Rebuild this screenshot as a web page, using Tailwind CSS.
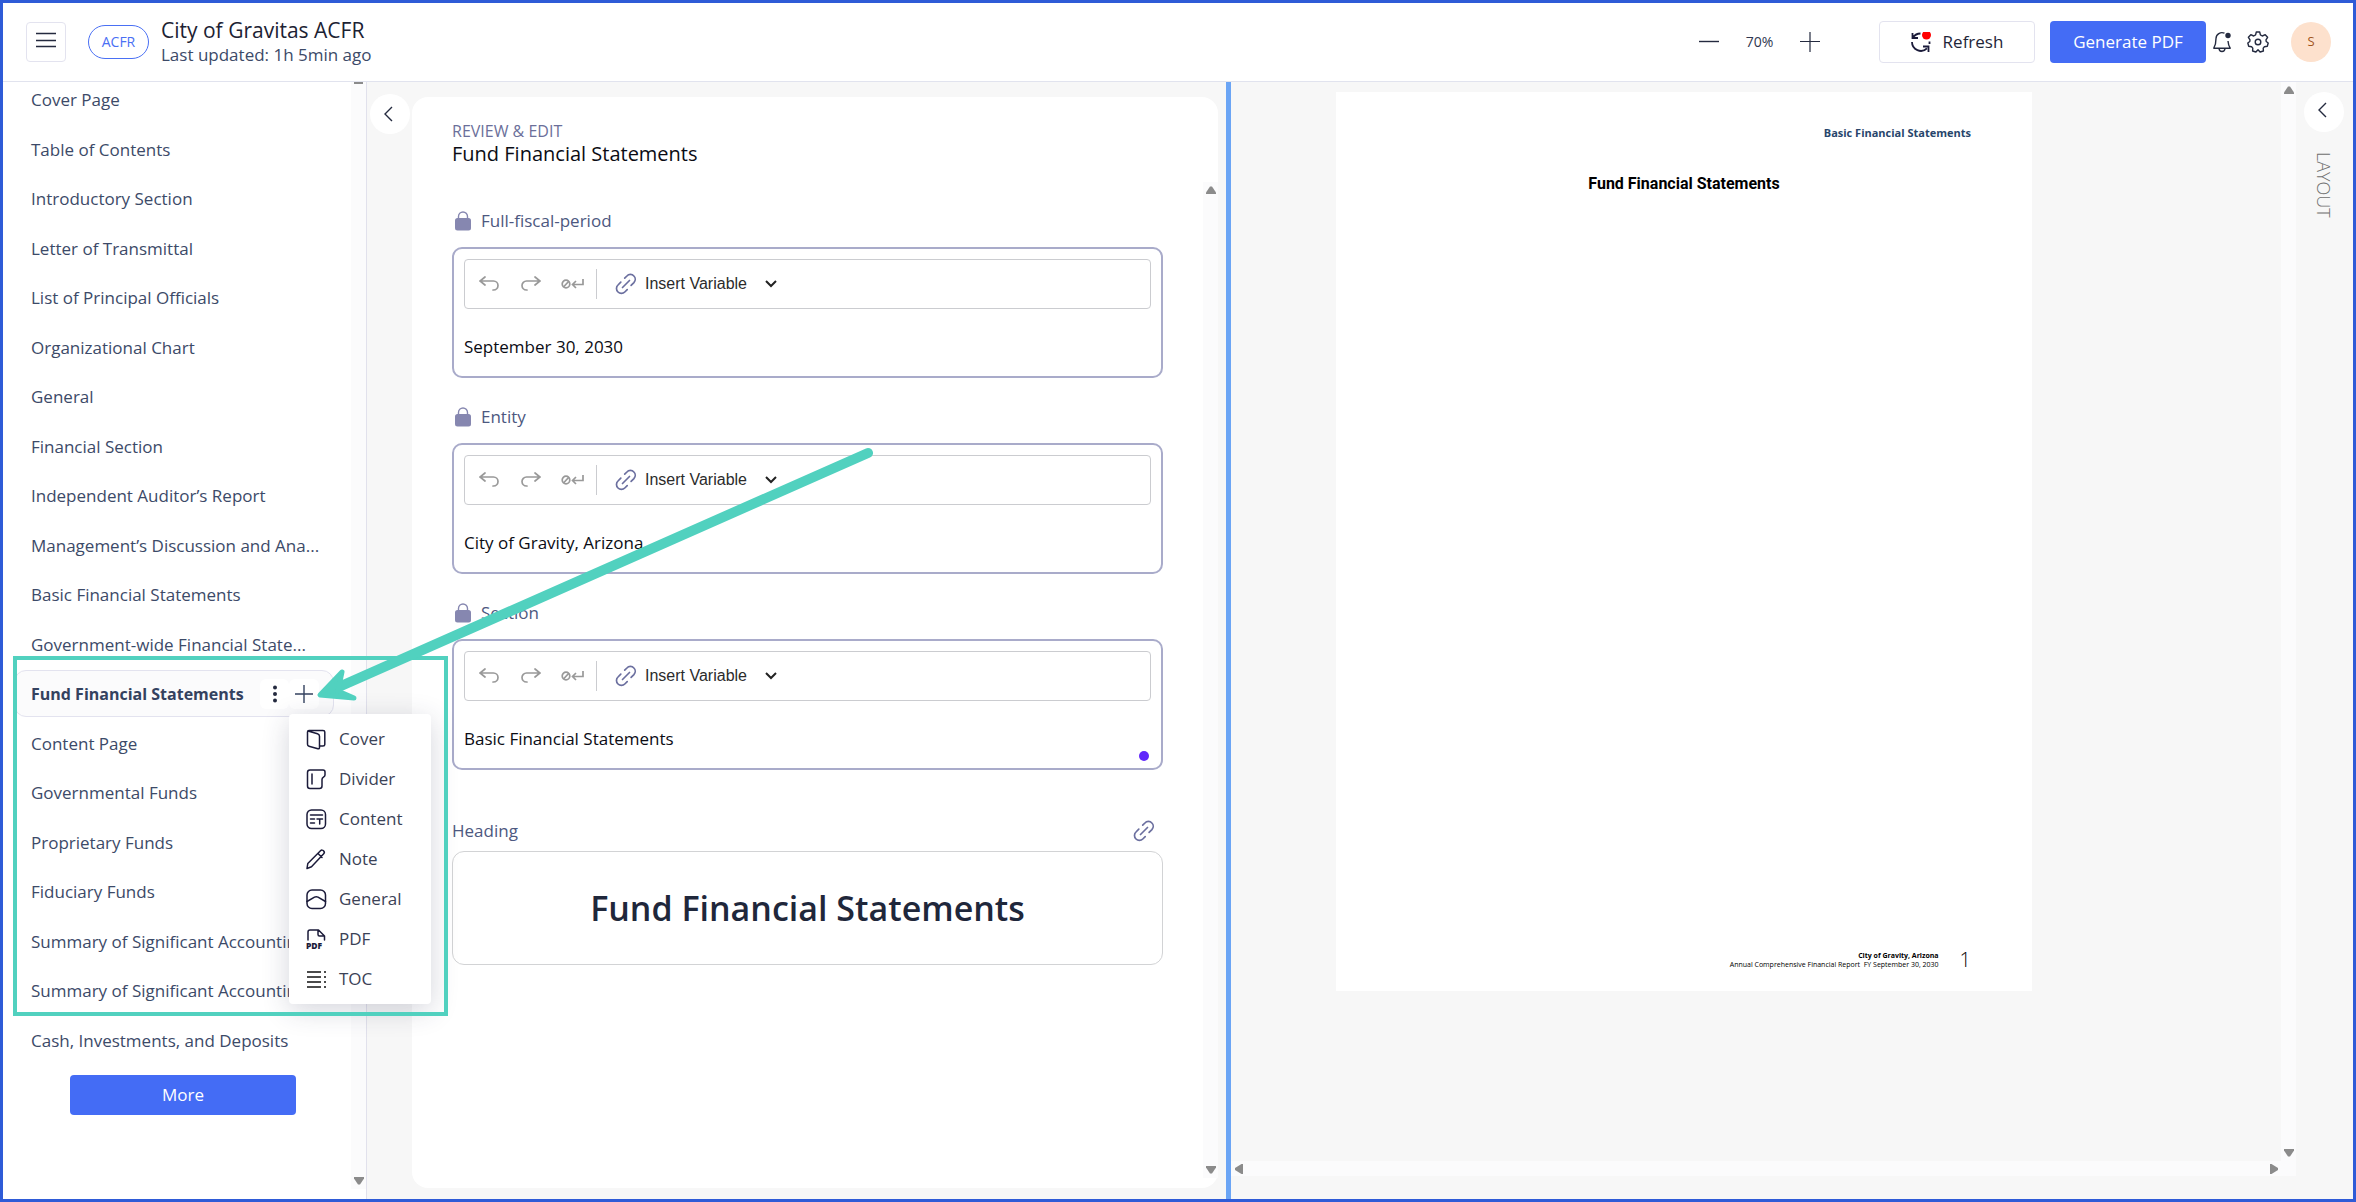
<!DOCTYPE html>
<html lang="en">
<head>
    <meta charset="UTF-8">
    <meta name="viewport" content="width=device-width, initial-scale=1.0">
    <title>City of Gravitas ACFR</title>
    <script src="https://cdn.jsdelivr.net/npm/@tailwindcss/browser@4"></script>
</head>
<body class="relative flex h-screen flex-col overflow-hidden border-3 border-[#2f5bd7] bg-white font-['Open_Sans',sans-serif] text-[17px] text-[#3c4a68]">
    <!-- Shared icons -->
    <svg class="hidden">
        <symbol id="link" viewBox="0 0 22 22" fill="none" stroke="currentColor" stroke-width="1.7" stroke-linecap="round">
            <path d="M7.5 14.5l7-7M9.7 5.2l2.2-2.2a4.6 4.6 0 0 1 7 0 4.8 4.8 0 0 1 0 6.6l-2.8 2.8M5.8 9.2L3 12a4.8 4.8 0 0 0 0 7 4.8 4.8 0 0 0 6.800 0l2.400-2.400"/>
        </symbol>
        <symbol id="lock" viewBox="0 0 16 20">
            <path d="M3.5 8V5.500a4.500 4.500 0 0 1 9 0V8" fill="none" stroke="currentColor" stroke-width="1.400"/>
            <rect y="7" width="16" height="12.500" rx="2.500" fill="currentColor"/>
        </symbol>
        <symbol id="chevron-left" viewBox="0 0 10 16" fill="none" stroke="currentColor" stroke-width="1.4">
            <path d="M9 1L2 8l7 7"/>
        </symbol>
        <symbol id="arrow-up" viewBox="0 0 10 8"><path d="M4 0.500h2L10 6.500v1.500H0V6.500z" fill="#8b8b8b"/></symbol>
        <symbol id="arrow-down" viewBox="0 0 10 8"><path d="M0 0h10v1.500L6 7.500H4L0 1.500z" fill="#8b8b8b"/></symbol>
    </svg>

    <!-- Top bar -->
    <header class="flex h-[79px] shrink-0 items-center border-b border-[#e1e3ee] pr-[22px] pl-[23px]">
        <button aria-label="Menu" class="flex size-10 items-center justify-center rounded border border-[#e3e3ef] pb-1">
            <svg class="h-4 w-5" viewBox="0 0 20 16" stroke="#242a3f" stroke-width="1.4"><path d="M0 1.500h20M0 8.500h20M0 14.500h20"/></svg>
        </button>
        <span class="ml-[22px] flex h-[34px] w-[61px] items-center justify-center rounded-full border border-[#4a70f4] text-sm text-[#4a70f4]">ACFR</span>
        <div class="ml-3">
            <h1 class="text-[21px] leading-[26px] text-[#1c2233]">City of Gravitas ACFR</h1>
            <p class="leading-6">Last updated: 1h 5min ago</p>
        </div>
        <div class="ml-auto flex items-center">
            <button aria-label="Zoom out" class="flex size-6 items-center justify-center">
                <svg class="size-5" viewBox="0 0 20 20" stroke="#242a3f" stroke-width="1.4"><path d="M0 9.500h20"/></svg>
            </button>
            <span class="w-[77px] text-center text-sm text-[#2f3750]">70%</span>
            <button aria-label="Zoom in" class="flex size-6 items-center justify-center">
                <svg class="size-5" viewBox="0 0 20 20" stroke="#242a3f" stroke-width="1.2"><path d="M0 9.500h20M10 0v20"/></svg>
            </button>
            <button class="ml-[57px] flex h-[42px] w-[156px] items-center justify-center gap-3 rounded border border-[#e3e3ef] text-[#1f2638]">
                <svg class="size-5" viewBox="0 0 20 20" fill="none" stroke="#1b1b3a" stroke-width="1.800">
                    <path d="M1 10a8.800 8.800 0 0 0 15 6.300"/>
                    <path d="M12 14.500h5.500V20M18.500 9.500v2.500" />
                    <path d="M1.500 1v5h5.500M2 5.500a9 9 0 0 1 7.500-4"/>
                    <circle cx="15.500" cy="3" r="4.500" fill="#f00" stroke="none"/>
                </svg>
                Refresh
            </button>
            <button class="ml-[15px] h-[42px] w-[156px] rounded bg-[#446cf5] text-white">Generate PDF</button>
            <button aria-label="Notifications" class="ml-[7px]">
                <svg class="h-[22px] w-[18px]" viewBox="0 0 18 22" fill="none" stroke="#242a3f" stroke-width="1.400" stroke-linejoin="round">
                    <path d="M11.500 2.200A6 6 0 0 0 3 7.500c0 5-.3 6.500-2.200 9.700h16.400C15.800 15 15.200 13 15 10M6 17.500c.3 4 5.700 4 6 0"/>
                    <circle cx="15" cy="4.500" r="2.700" fill="#242a3f" stroke="none"/>
                </svg>
            </button>
            <button aria-label="Settings" class="ml-4">
                <svg class="size-[22px]" viewBox="0 0 22 22" fill="none" stroke="#242a3f" stroke-width="1.400" stroke-linejoin="round">
                    <path d="M9.300 1h3.400l.7 2.900 1.900 1.100 2.900-1.300 2.400 2.600-1.600 2.500.2 1.700 2 1.500-.9 3.300-2.900.4-1.200 1.400.2 2.900-3.300 1L11 18.700l-2.100 2.300-3.300-1 .2-2.900-1.200-1.400-2.900-.4L.8 12l2-1.500.2-1.700-1.600-2.500 2.400-2.600L6.700 5l1.900-1.100z"/>
                    <circle cx="11" cy="11" r="2.800"/>
                </svg>
            </button>
            <span class="ml-[22px] flex size-10 items-center justify-center rounded-full bg-[#fde1cd] text-[13px] text-[#a0551c]">S</span>
        </div>
    </header>

    <main class="grid min-h-0 flex-1 grid-cols-[364px_859fr_5px_1067fr_55px]">
        <!-- Document outline -->
        <aside class="flex min-h-0 border-r border-[#e1e1ec]">
            <nav class="min-w-0 flex-1 overflow-hidden pl-[11px]">
                <ul id="outline" class="-mt-[7px] flex h-[990px] flex-col"></ul>
                <button class="mt-[10px] ml-14 h-10 w-[226px] rounded bg-[#446cf5] text-white">More</button>
            </nav>
            <div class="mb-[10px] flex w-[15px] flex-col items-center justify-between bg-[#fbfbfc] pb-1">
                <span class="h-[2px] w-[9px] bg-[#8b8b8b]"></span>
                <svg class="h-2 w-[10px]"><use href="#arrow-down"/></svg>
            </div>
        </aside>

        <!-- Editor -->
        <section class="flex min-h-0 bg-[#f7f7f7] pr-2 pb-[11px]">
            <button aria-label="Collapse outline" class="mt-3 ml-[3px] flex size-10 shrink-0 items-center justify-center rounded-full bg-white pr-1 text-[#242a3f]">
                <svg class="h-4 w-[10px]"><use href="#chevron-left"/></svg>
            </button>
            <div class="mt-[15px] ml-[2px] flex min-w-0 flex-1 flex-col rounded-2xl bg-white pb-[10px] pl-10">
                <div class="pt-[22px]">
                    <p class="text-[16px] leading-6 text-[#6b6f9a]">REVIEW &amp; EDIT</p>
                    <h2 class="text-xl leading-[22px] font-medium text-[#0b0c14]">Fund Financial Statements</h2>
                </div>
                <div class="mt-[17px] flex min-h-0 flex-1">
                    <div class="flex-1 pt-[19px] pr-[40px]">
                        <div id="fields"></div>
                        <div class="mt-[26px] flex h-9 items-center justify-between pr-2 pb-1">
                            <label for="heading" class="text-[#4d5880]">Heading</label>
                            <button aria-label="Link heading" class="text-[#6b6f9f]"><svg class="size-[22px]"><use href="#link"/></svg></button>
                        </div>
                        <input id="heading" value="Fund Financial Statements" class="h-[114px] w-full rounded-xl border border-[#d2d3d5] text-center text-[34px] font-semibold text-[#1f273b]">
                    </div>
                    <div class="flex w-[15px] flex-col items-center justify-between bg-[#fbfbfc] py-1">
                        <svg class="h-2 w-[10px]"><use href="#arrow-up"/></svg>
                        <svg class="h-2 w-[10px]"><use href="#arrow-down"/></svg>
                    </div>
                </div>
            </div>
        </section>

        <div class="bg-[#6ba5f5]"></div>

        <!-- Page preview -->
        <section class="flex min-h-0 flex-col bg-[#f7f7f7] pr-[2px] pb-[23px]">
            <div class="flex min-h-0 flex-1">
                <div class="flex flex-1 justify-center pt-[10px] pr-[144px]">
                    <article class="flex h-[899px] w-[696px] flex-col bg-white px-[61px] pt-[32px] pb-[17px]">
                        <p class="text-right text-[11px] leading-[18px] font-bold text-[#27456b]">Basic Financial Statements</p>
                        <h3 class="mt-8 text-center font-['Roboto',sans-serif] text-[16px] leading-5 font-bold text-black">Fund Financial Statements</h3>
                        <footer class="mt-auto flex items-center justify-end gap-[21px] text-black">
                            <p class="text-right text-[7px] leading-[9px]"><b>City of Gravity, Arizona</b><br>Annual Comprehensive Financial Report&nbsp; FY September 30, 2030</p>
                            <span class="text-xl font-light">1</span>
                        </footer>
                    </article>
                </div>
                <div class="flex w-[15px] flex-col items-center justify-between bg-[#fbfbfc] py-1">
                    <svg class="h-2 w-[10px]"><use href="#arrow-up"/></svg>
                    <svg class="h-2 w-[10px]"><use href="#arrow-down"/></svg>
                </div>
            </div>
            <div class="flex h-[15px] items-center justify-between bg-[#fbfbfc] pr-[18px] pl-1">
                <svg class="h-[10px] w-2" viewBox="0 0 8 10"><path d="M0 4v2l6.500 4H8V0H6.500z" fill="#8b8b8b"/></svg>
                <svg class="h-[10px] w-2" viewBox="0 0 8 10"><path d="M8 4v2l-6.500 4H0V0h1.500z" fill="#8b8b8b"/></svg>
            </div>
        </section>

        <aside class="flex flex-col items-center bg-[#f7f7f7] pt-[10px] pr-1">
            <button aria-label="Open layout" class="flex size-10 items-center justify-center rounded-full bg-white pr-1 pb-1 text-[#242a3f]">
                <svg class="h-4 w-[10px]"><use href="#chevron-left"/></svg>
            </button>
            <span class="mt-5 text-[18px] leading-6 font-light text-[#6f6f6f] [writing-mode:vertical-rl]">LAYOUT</span>
        </aside>
    </main>

    <!-- Add page menu -->
    <div id="add-menu" class="absolute top-[711px] left-[286px] w-[142px] rounded bg-white py-[5px] shadow-[0_6px_28px_rgba(40,45,80,0.2)]"></div>

    <!-- Callout -->
    <div class="pointer-events-none absolute top-[653px] left-[10px] h-[360px] w-[435px] border-4 border-[#51d1bf]"></div>
    <svg class="pointer-events-none absolute top-[435px] left-[307px] h-[270px] w-[570px]" viewBox="0 0 570 270" fill="none" stroke="#51d1bf" stroke-linecap="round" stroke-linejoin="round">
        <path d="M558 15L22 252" stroke-width="10"/>
        <path d="M32 234L10 257l34 3-16-7z" stroke-width="5" fill="#51d1bf"/>
    </svg>

    <script>
        const selected = 'Fund Financial Statements';
        const outline = [
            'Cover Page', 'Table of Contents', 'Introductory Section', 'Letter of Transmittal',
            'List of Principal Officials', 'Organizational Chart', 'General', 'Financial Section',
            'Independent Auditor’s Report', 'Management’s Discussion and Ana...', 'Basic Financial Statements',
            'Government-wide Financial State...', selected, 'Content Page', 'Governmental Funds',
            'Proprietary Funds', 'Fiduciary Funds', 'Summary of Significant Accountin',
            'Summary of Significant Accountin', 'Cash, Investments, and Deposits'
        ];

        const fields = [
            { label: 'Full-fiscal-period', value: 'September 30, 2030' },
            { label: 'Entity', value: 'City of Gravity, Arizona' },
            { label: 'Section', value: 'Basic Financial Statements', dirty: true }
        ];

        const pageTypes = [
            { name: 'Cover', icon: '<path d="M2 2l9.500 2.800c1.300.4 2 1.200 2 2.500v11.200c0 1-.6 1.500-1.600 1.200L3 17.200c-1-.3-1.500-.9-1.500-2V3c0-1 .5-1.500 1.500-1.500h14c1 0 1.800.5 1.800 1.500v12.500c0 1-.8 1.500-1.800 1.500h-3.300"/>' },
            { name: 'Divider', icon: '<path d="M4 1h13c1.500 0 2 .8 2 2v3c0 1-.5 1.500-1.500 2.200S16 9.500 16 10.500V17c0 1.500-.8 2.500-2.500 2.500H4c-1.500 0-2.500-1-2.500-2.500V3.500C1.500 2 2.500 1 4 1zM6 5v10"/>' },
            { name: 'Content', icon: '<rect x="1" y="1" width="18.500" height="18.500" rx="4.500"/><path d="M4.500 6h12M4.500 10h4M4.500 14h4M11 10h5.500M13.700 10v5"/>' },
            { name: 'Note', icon: '<path d="M1 19.500l.8-5L14.500 1.800c1-1 2.200-.8 3 0s1.200 2 .2 3L5.500 17.800zM12 4.500l4 4"/>' },
            { name: 'General', icon: '<rect x="1" y="1" width="18.500" height="18.500" rx="5"/><path d="M1 12.500l7.500-4.300c1-.6 2.500-.6 3.500 0l7.500 4.300"/>' },
            { name: 'PDF', icon: '<path d="M2 11V3c0-1.200.8-2 2-2h8.500L18.500 7v4M12 1v4.500c0 1 .5 1.500 1.500 1.500h5"/><text x="0" y="20" font-size="8.500" font-weight="800" font-family="Open Sans" fill="#1b1b3a" stroke="none">PDF</text>' },
            { name: 'TOC', icon: '<path d="M1 3h14M1 8h14M1 13h14M1 18h14M18 3h2M18 8h2M18 13h2M18 18h2" stroke="#111" stroke-linecap="butt"/>' }
        ];

        document.getElementById('outline').innerHTML = outline.map(name => name === selected ? `
            <li class="flex flex-1 items-center">
                <div class="flex h-[47px] w-80 items-center rounded-xl border border-[#e3e3ef] bg-[#fbfbfc] pl-4">
                    <a href="#" class="w-[229px] text-base font-bold text-[#34425f]">${name}</a>
                    <button aria-label="Page options" class="flex h-[30px] w-[29px] items-center justify-center rounded-md bg-white">
                        <svg class="h-[18px] w-1" viewBox="0 0 4 18" fill="#242a3f"><circle cx="2" cy="2.500" r="2"/><circle cx="2" cy="9" r="2"/><circle cx="2" cy="15.500" r="2"/></svg>
                    </button>
                    <button aria-label="Add page" class="flex h-[30px] w-[30px] items-center justify-center rounded-md bg-white">
                        <svg class="size-[18px]" viewBox="0 0 18 18" stroke="#34425f" stroke-width="1.400"><path d="M0 9h18M9 0v18"/></svg>
                    </button>
                </div>
            </li>` : `
            <li class="flex flex-1 items-center pl-[17px]"><a href="#" class="whitespace-nowrap">${name}</a></li>
        `).join('');

        document.getElementById('fields').innerHTML = fields.map((field, i) => `
            <div class="h-[196px]">
                <div class="flex h-10 items-center gap-[10px] pl-[3px]">
                    <svg class="h-5 w-4 text-[#8687b0]"><use href="#lock"/></svg>
                    <label for="field-${i}" class="text-[#4d5880]">${field.label}</label>
                </div>
                <div class="relative mt-[6px] h-[131px] rounded-[10px] border-2 border-[#a9abca] p-[10px]">
                    <div class="flex h-[50px] items-center rounded border border-[#cbccd0] pl-[14px] text-[#999]">
                        <button aria-label="Undo"><svg class="h-4 w-5" viewBox="0 0 20 16" fill="none" stroke="currentColor" stroke-width="1.700" stroke-linecap="round"><path d="M6 1L1 5l5 4M1 5h13.500a4.500 4.500 0 0 1 0 9H14"/></svg></button>
                        <button aria-label="Redo" class="ml-[22px]"><svg class="h-4 w-5" viewBox="0 0 20 16" fill="none" stroke="currentColor" stroke-width="1.700" stroke-linecap="round"><path d="M14 1l5 4-5 4M19 5H5.500a4.500 4.500 0 0 0 0 9H6"/></svg></button>
                        <button aria-label="Remove line break" class="ml-5"><svg class="h-3 w-[23px]" viewBox="0 0 23 12" fill="none" stroke="currentColor" stroke-width="1.700"><circle cx="5" cy="6" r="3.800"/><path d="M2.500 9L8 3M22 1v5.500H12M15 3l-3.500 3.500L15 10"/></svg></button>
                        <span class="ml-3 h-[30px] w-px bg-[#cbccd0]"></span>
                        <span class="ml-[18px] text-[#6b6f9f]"><svg class="size-[22px]"><use href="#link"/></svg></span>
                        <div class="relative ml-2 flex items-center">
                            <select aria-label="Insert Variable" class="w-[136px] appearance-none bg-transparent font-['Liberation_Sans',sans-serif] text-base text-[#2b2b2b]"><option>Insert Variable</option></select>
                            <svg class="pointer-events-none absolute right-1 h-2 w-3" viewBox="0 0 12 8" fill="none" stroke="#222" stroke-width="2"><path d="M1 1l5 5 5-5"/></svg>
                        </div>
                    </div>
                    <input id="field-${i}" value="${field.value}" class="mt-[23px] block h-7 w-full text-[#0b0c14]">
                    ${field.dirty ? '<span class="absolute right-3 bottom-[7px] size-[10px] rounded-full bg-[#6126fb]"></span>' : ''}
                </div>
            </div>
        `).join('');

        document.getElementById('add-menu').innerHTML = pageTypes.map(type => `
            <button class="flex h-10 w-full items-center gap-3 pl-[17px] text-[#3b4256]">
                <svg class="size-[21px]" viewBox="0 0 21 21" fill="none" stroke="#1b1b3a" stroke-width="1.500" stroke-linecap="round" stroke-linejoin="round">${type.icon}</svg>
                ${type.name}
            </button>
        `).join('');
    </script>
</body>
</html>
